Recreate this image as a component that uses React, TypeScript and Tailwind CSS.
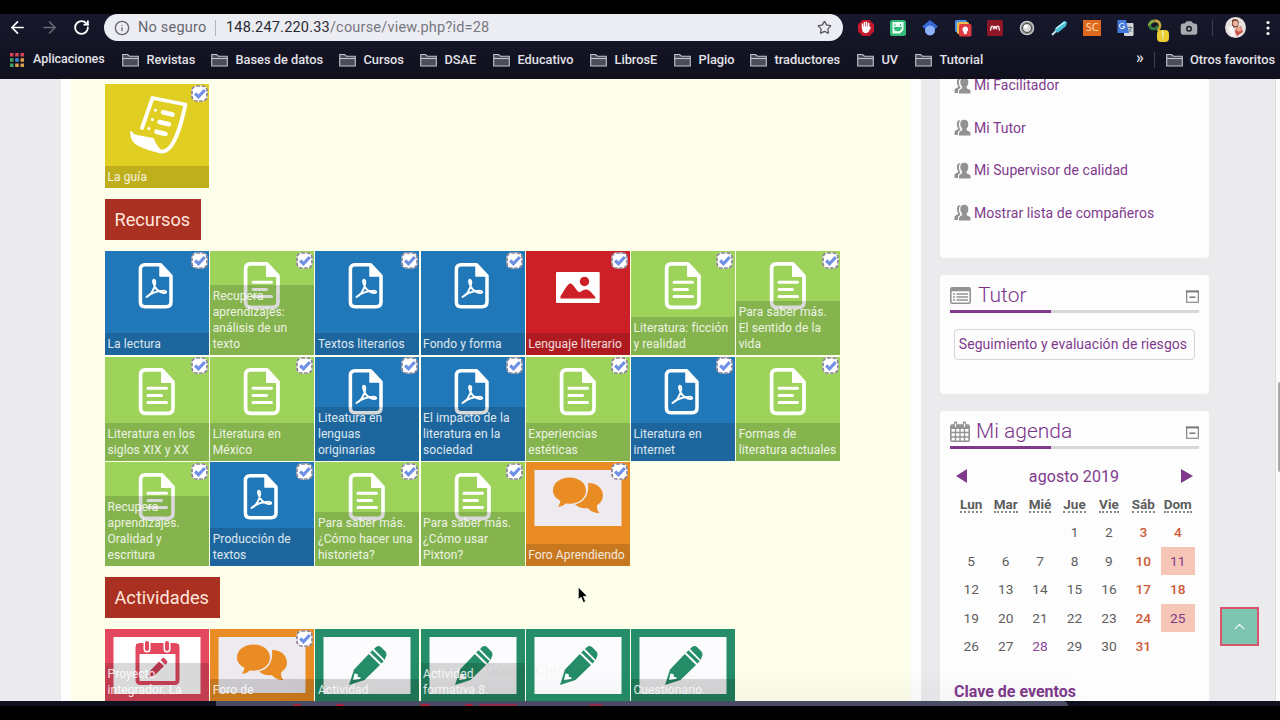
import React from 'react';
import { ArrowLeft, ArrowRight, RotateCw, Info, Star, Camera, ChevronUp } from 'lucide-react';
import clsx from 'clsx';

type Kind = 'guide' | 'pdf' | 'doc' | 'image' | 'forum' | 'calendar' | 'pencil';

interface TileData {
  kind: Kind;
  lines: string[];
  done?: boolean;
}

const tileColors: Record<Kind, string> = {
  guide: 'bg-[#e1ce22]',
  pdf: 'bg-[#2178b9]',
  doc: 'bg-[#9dd35b]',
  image: 'bg-[#cc1f26]',
  forum: 'bg-[#ea8c24]',
  calendar: 'bg-[#e4485f]',
  pencil: 'bg-[#258e68]',
};

const resources: TileData[] = [
  { kind: 'pdf', lines: ['La lectura'], done: true },
  { kind: 'doc', lines: ['Recupera', 'aprendizajes:', 'análisis de un', 'texto'], done: true },
  { kind: 'pdf', lines: ['Textos literarios'], done: true },
  { kind: 'pdf', lines: ['Fondo y forma'], done: true },
  { kind: 'image', lines: ['Lenguaje literario'], done: true },
  { kind: 'doc', lines: ['Literatura: ficción', 'y realidad'], done: true },
  { kind: 'doc', lines: ['Para saber más.', 'El sentido de la', 'vida'], done: true },
  { kind: 'doc', lines: ['Literatura en los', 'siglos XIX y XX'], done: true },
  { kind: 'doc', lines: ['Literatura en', 'México'], done: true },
  { kind: 'pdf', lines: ['Liteatura en', 'lenguas', 'originarias'], done: true },
  { kind: 'pdf', lines: ['El impacto de la', 'literatura en la', 'sociedad'], done: true },
  { kind: 'doc', lines: ['Experiencias', 'estéticas'], done: true },
  { kind: 'pdf', lines: ['Literatura en', 'internet'], done: true },
  { kind: 'doc', lines: ['Formas de', 'literatura actuales'], done: true },
  { kind: 'doc', lines: ['Recupera', 'aprendizajes.', 'Oralidad y', 'escritura'], done: true },
  { kind: 'pdf', lines: ['Producción de', 'textos'], done: true },
  { kind: 'doc', lines: ['Para saber más.', '¿Cómo hacer una', 'historieta?'], done: true },
  { kind: 'doc', lines: ['Para saber más.', '¿Cómo usar', 'Pixton?'], done: true },
  { kind: 'forum', lines: ['Foro Aprendiendo'], done: true },
];

const activities: TileData[] = [
  { kind: 'calendar', lines: ['Proyecto', 'integrador. La', '', ''] },
  { kind: 'forum', lines: ['Foro de', '', ''], done: true },
  { kind: 'pencil', lines: ['Actividad', '', ''] },
  { kind: 'pencil', lines: ['Actividad', 'formativa 8.', '', ''] },
  { kind: 'pencil', lines: [''] },
  { kind: 'pencil', lines: ['Cuestionario.', '', ''] },
];

const bookmarks = [
  { label: 'Revistas', width: 'w-[89px]' },
  { label: 'Bases de datos', width: 'w-[128px]' },
  { label: 'Cursos', width: 'w-[81px]' },
  { label: 'DSAE', width: 'w-[73px]' },
  { label: 'Educativo', width: 'w-[97px]' },
  { label: 'LibrosE', width: 'w-[84px]' },
  { label: 'Plagio', width: 'w-[76px]' },
  { label: 'traductores', width: 'w-[107px]' },
  { label: 'UV', width: 'w-[58px]' },
  { label: 'Tutorial', width: 'w-[221px]' },
];

const weekDays = ['Lun', 'Mar', 'Mié', 'Jue', 'Vie', 'Sáb', 'Dom'];

const TileIcon: React.FC<{ kind: Kind }> = ({ kind }) => (
  <svg viewBox="0 0 104 104" className="block h-[104px] w-[104px]" fill="none">
    {kind === 'guide' && (
      <g stroke="#fff" strokeWidth="3.8" strokeLinejoin="round" strokeLinecap="round">
        <path d="M37 44L47.500 14L80.500 20.500C77 36 74 49 68 59C64 66 59 68.500 54 67.200" />
        <path d="M26 48C27 50 29 51.500 32 52L48 55C50 60 52 64 57 67.500C52 68.500 48 66.500 35 62C28 59 26 54 26 48Z" fill="#fff" strokeWidth="1.800" />
        <path d="M58 28.300L67.500 30.600M54.500 38L64 40.300M51.500 47.700L60.500 50" strokeWidth="4.600" />
        <path d="M50.500 26.200h.1M47.300 35.500h.1M43.800 44.500h.1" strokeWidth="3" />
      </g>
    )}
    {kind === 'pdf' && (
      <g stroke="#fff" strokeLinejoin="round" strokeLinecap="round">
        <path d="M40 13.700H55.500L66 25V51Q66 55.700 61 55.700H40Q35.400 55.700 35.400 51V18.500Q35.400 13.700 40 13.700Z" strokeWidth="3.500" />
        <path d="M55 13.500V25H66Z" fill="#fff" strokeWidth="1.500" />
        <path d="M41.500 46C46 44 49 38 50.200 32.500C50.800 28 47.300 27.500 48.200 31.500C49.500 37 53 41 59 42C62.500 42.300 61.500 39.300 58 39.700C52 40 45.500 42.500 41.500 46Z" strokeWidth="1.900" />
      </g>
    )}
    {kind === 'doc' && (
      <g stroke="#fff" strokeLinejoin="round" strokeLinecap="round">
        <path d="M40.500 12.900H57L68 25V51Q68 56.300 63 56.300H40.500Q35.600 56.300 35.600 51V18Q35.600 12.900 40.500 12.900Z" strokeWidth="3.700" />
        <path d="M57 13V25H68Z" fill="#fff" strokeWidth="2" />
        <path d="M43 31.200H61.500M43 38.400H56.500M43 45.600H61.500" strokeWidth="3" />
      </g>
    )}
    {kind === 'image' && (
      <g>
        <rect x="30" y="21" width="43.700" height="31" rx="1" fill="#fff" />
        <circle cx="58.500" cy="30.500" r="4.700" fill="#cc1f26" />
        <path d="M34.500 47.500V45C38 41 41 32.500 44.500 32.500C48 33 50 40 53 41C55 41.500 57 37.800 60.500 38.500C64 39 66.500 43 69.300 46V47.500Z" fill="#cc1f26" />
      </g>
    )}
    {kind === 'forum' && (
      <g>
        <rect x="8.500" y="8" width="87" height="56" fill="#eeebf0" />
        <path d="M62 21C70 20.500 77 26 77 33.500C77 38 74.500 41 71.300 43C70.500 46 71.500 49 73.500 51C68 51 64.500 49 62 46.200C56 46.800 52 45 49 42.500C58 40.500 63.500 33 62 21Z" fill="#ea8c24" />
        <path d="M43.500 15.500C53 15.500 60 21 60 28.500C60 36 53 41.700 43.500 41.700L39.500 41.400C37.500 43.500 35 44.600 31.500 44.600C33.200 43 34.300 41 34.300 38.700C29.800 36.500 27 33 27 28.500C27 21 34 15.500 43.500 15.500Z" fill="#ea8c24" />
      </g>
    )}
    {kind === 'calendar' && (
      <g>
        <rect x="8.500" y="8" width="87" height="57" fill="#fff" />
        <rect x="32.500" y="16" width="40" height="38" rx="2.500" stroke="#e4485f" strokeWidth="4" />
        <path d="M31 15H74V25H31Z" fill="#e4485f" />
        <path d="M42 14V20M62 14V20" stroke="#fff" strokeWidth="7" strokeLinecap="round" />
        <path d="M42 14V20M62 14V20" stroke="#e4485f" strokeWidth="4" strokeLinecap="round" />
        <path d="M43 48.500L45 42L54 32.500L59 37L49.500 46.500ZM55.500 31L57.500 29.200Q58.500 28.400 59.500 29.200L62 32Q62.800 33 62 34L60.300 35.800Z" fill="#d2405a" />
      </g>
    )}
    {kind === 'pencil' && (
      <g>
        <rect x="8.500" y="8" width="87" height="57" fill="#fcfbfd" />
        <path d="M34 56L39 40.500L53.800 25L65 36L49.500 51Z" fill="#258e68" />
        <path d="M55.200 23.600L57.500 21.300L68.700 32.200L66.400 34.500Z" fill="#258e68" />
        <path d="M59 20L61 18Q63.500 16 66 18L70.500 22.500Q72.500 25.500 70.500 28.500L69.800 31Z" fill="#258e68" />
        <path d="M38 51L39.500 44.500L42.500 45L43 48L46 48.500L45 50Z" fill="#fff" />
      </g>
    )}
  </svg>
);

const Tile: React.FC<TileData> = ({ kind, lines, done }) => (
  <div className={clsx('relative h-[104px] w-[104px]', tileColors[kind])}>
    <TileIcon kind={kind} />
    <div className="absolute inset-x-0 bottom-0 bg-black/15 py-[3px] pl-[2.5px] text-[12px] leading-4 tracking-[0.1px] whitespace-nowrap text-white/85">
      {lines.map((line, i) => (
        <div key={i} className="h-4">{line}</div>
      ))}
    </div>
    {done && (
      <svg viewBox="0 0 17 17" className="absolute top-[0.5px] right-[1.5px] h-[17px] w-[17px]" fill="none">
        <rect x="1.500" y="1.500" width="14" height="14" rx="4" fill="#fff" stroke="#fff" strokeWidth="2" />
        <rect x="1" y="1" width="15" height="15" rx="4.500" stroke="#8b8296" strokeWidth="1.700" strokeDasharray="3.600 1.500" />
        <path d="M4.200 8.500L7.500 11.800L13.800 5" stroke="#6f90e4" strokeWidth="3.200" />
      </svg>
    )}
  </div>
);

const Folder: React.FC = () => (
  <svg viewBox="0 0 17 14" className="h-[14px] w-[17px] shrink-0" fill="#4c4d5b" stroke="#c3c3cb" strokeWidth="1.1">
    <path d="M.7 13V1.500H5.500L7.500 3.200H16.300V13Z" />
    <path d="M.7 5.500H16.300" />
  </svg>
);

const Users: React.FC = () => (
  <svg viewBox="0 0 17 17" className="h-[17px] w-[17px]" fill="#929292">
    <path d="M5.500 1.200C3.800 1.200 2.800 2.800 2.900 5C3 7 3.600 8.500 4.300 9.500C4 11 1 11.200.5 12.800V16H4V13.200C4.500 11.800 6 11.500 6.500 10.500C5.300 9 4.700 6.800 4.900 4.800C5 3.200 5.600 2 6.800 1.400Z" />
    <path d="M10.300.8C7.600.8 6.200 2.500 6.300 5C6.400 7.200 7.200 8.600 8.100 9.600V11C7.600 12.200 5.200 12.300 5 13.800V16.500H16.500V13.800C16 12.200 13.200 12.200 12.600 11V9.600C13.700 8.500 14.300 7 14.300 5C14.300 2.500 13 .8 10.300.8Z" />
  </svg>
);

const AppsIcon: React.FC = () => (
  <svg viewBox="0 0 14 14" className="h-[14px] w-[14px] shrink-0">
    <path d="M0 0h3.500v3.500H0zM5.200 0h3.500v3.500H5.200zM10.500 0h3.500v3.500h-3.500z" fill="#d84455" />
    <path d="M0 5.200h3.500v3.500H0zM0 10.500h3.500v3.500H0z" fill="#3fa565" />
    <path d="M5.200 5.200h3.500v3.500H5.200z" fill="#3f87dc" />
    <path d="M10.500 5.200h3.500v3.500h-3.500zM10.500 10.500h3.500v3.500h-3.500zM5.200 10.500h3.500v3.500H5.200z" fill="#dfa04a" />
  </svg>
);

const Extensions: React.FC = () => (
  <div className="ml-[13.5px] flex items-center gap-[14.4px]">
    <svg viewBox="0 0 18 18" className="h-[18px] w-[18px] shrink-0">
      <path d="M5.500 1H12.500L17 5.500V12.500L12.500 17H5.500L1 12.500V5.500Z" fill="#c3192b" />
      <path d="M5.500 8V5M7.500 8V3.500M9.600 8V3.300M11.700 9V4.500" stroke="#fff" strokeWidth="1.500" strokeLinecap="round" />
      <path d="M4.800 7.500H12.500L14 8.500L11.500 13Q8.500 15.300 6 13Q4.800 11.500 4.800 7.500Z" fill="#fff" />
    </svg>
    <svg viewBox="0 0 18 18" className="h-[18px] w-[18px] shrink-0">
      <rect x="1" y="1" width="16" height="16" rx="2.500" fill="#32bb78" />
      <path d="M3.500 3H14.500V11L11 14.500H3.500Z" fill="#eafff3" />
      <path d="M6 5v2M11.500 5v2M5 8.500H12.500Q12 12 8.700 12Q5.500 12 5 8.500Z" fill="#32bb78" stroke="#32bb78" />
    </svg>
    <svg viewBox="0 0 18 18" className="h-[18px] w-[18px] shrink-0">
      <path d="M9 1L17 7.500L14 10H4L1 7.500Z" fill="#356ad5" />
      <circle cx="9" cy="11.500" r="5" fill="#8db2f7" />
    </svg>
    <svg viewBox="0 0 18 18" className="h-[18px] w-[18px] shrink-0">
      <rect x="1" y="1" width="12" height="12" rx="1.500" fill="#4895e8" />
      <rect x="3" y="3" width="12" height="12" rx="1.500" fill="#e9bd47" />
      <rect x="5" y="5" width="12.500" height="12.500" rx="1.500" fill="#dd3941" />
      <path d="M11.300 7.500a3 3 0 0 1 1.500 5.500v2h-3v-2a3 3 0 0 1 1.500-5.500z" fill="#fff" />
    </svg>
    <svg viewBox="0 0 18 18" className="h-[18px] w-[18px] shrink-0">
      <rect x="1" y="1" width="16" height="16" rx="2" fill="#8f1626" />
      <path d="M4.200 11.500Q5 10.500 5 9Q5 7.300 6.300 7.300Q7.500 7.300 7.600 9V10.500M10.400 10.500V9Q10.500 7.300 11.700 7.300Q13 7.300 13 9Q13 10.500 13.800 11.500" stroke="#f6dfe3" strokeWidth="1.500" fill="none" />
      <circle cx="9" cy="8.200" r="1.500" fill="#f6dfe3" />
    </svg>
    <svg viewBox="0 0 18 18" className="h-[18px] w-[18px] shrink-0">
      <circle cx="9" cy="9" r="6.700" fill="#8d8f91" stroke="#c9c9c9" strokeWidth="1.200" />
      <circle cx="9" cy="9" r="4.500" fill="#d9d9d9" stroke="#444" />
      <circle cx="7.800" cy="7.500" r="2" fill="#fff" />
    </svg>
    <svg viewBox="0 0 18 18" className="h-[18px] w-[18px] shrink-0">
      <path d="M1 16L6 11" stroke="#c5dce8" strokeWidth="2" />
      <path d="M3.500 10L13 2L16 3L15 7L6.500 14Z" fill="#48bfd8" />
      <path d="M5 9.500L14 3" stroke="#c6f1fa" strokeWidth="1.500" />
    </svg>
    <div className="flex h-4 w-[18px] shrink-0 items-center justify-center bg-[#df681f] px-px font-['Open_Sans',sans-serif] text-[11px] text-[#ffe1b8]">SC</div>
    <svg viewBox="0 0 18 18" className="h-[18px] w-[18px] shrink-0">
      <rect x="8" y="4" width="9.500" height="13" rx="1" fill="#d4d6d9" />
      <path d="M1.500 1H10L13 14H1.500Z" fill="#4479dc" />
      <path d="M8.500 5.500A2.700 2.700 0 1 0 8.800 7.700H6.500" stroke="#fff" fill="none" />
      <path d="M11.500 8.500H16M14 7V8.500M15.500 9Q14 12 12.500 13M12.500 10L15.500 13" stroke="#66788a" fill="none" />
    </svg>
    <div className="relative h-[18px] w-[18px] shrink-0">
      <svg viewBox="0 0 18 18" className="h-[18px] w-[18px]" fill="none" strokeWidth="2.800">
        <path d="M1 7Q2 2 6.500 2" stroke="#83ab3f" />
        <path d="M6.500 2Q12 1.500 12 7L10 12" stroke="#c7a93e" />
        <path d="M1.500 6.500Q3 11 8 9.500L9.500 7" stroke="#2f7a3e" />
      </svg>
      <span className="absolute top-[11px] left-[9px] flex h-3 w-3 items-center justify-center rounded-sm bg-[#e8cc32] text-[10px] text-white">!</span>
    </div>
    <Camera size={18} strokeWidth={2} fill="#a9abb0" color="#a9abb0" className="shrink-0 [&>circle]:fill-[#a9abb0] [&>circle]:stroke-[#17192a]" />
  </div>
);

const Collapse: React.FC = () => (
  <svg viewBox="0 0 13 13" className="mt-[2px] ml-auto h-[13px] w-[13px]" fill="none" stroke="#777">
    <path d="M.700 1.500H12.300V12.300H.700Z" strokeWidth="1.100" />
    <path d="M0 1.400H13" strokeWidth="2" />
    <path d="M3.500 7.200H9.500" strokeWidth="1.500" />
  </svg>
);

interface BlockHeaderProps {
  icon: React.ReactNode;
  title: string;
  titleClass: string;
}

const BlockHeader: React.FC<BlockHeaderProps> = ({ icon, title, titleClass }) => (
  <div>
    <div className="flex h-[35px] items-center pt-[5px]">
      {icon}
      <h2 className={clsx('text-[21px] leading-6 font-light text-[#7c3489]', titleClass)}>{title}</h2>
      <Collapse />
    </div>
    <div className="h-[3px] bg-[#d8d8da]">
      <div className="h-full w-[101px] bg-[#803a8c]"></div>
    </div>
  </div>
);

const Calendar: React.FC = () => (
  <div className="mx-1 mt-[19px]">
    <div className="flex h-4 items-center justify-between px-[2px]">
      <svg viewBox="0 0 11 14" className="h-[14px] w-[11px]" fill="#803a8c"><path d="M11 0V14L0 7Z" /></svg>
      <span className="pt-[2px] text-[16px] leading-4 tracking-[0.1px] text-[#803a8c]">agosto 2019</span>
      <svg viewBox="0 0 12 14" className="h-[14px] w-[12px]" fill="#803a8c"><path d="M0 0V14L12 7Z" /></svg>
    </div>
    <div className="mt-[6px] grid grid-cols-7 auto-rows-[28.4px] text-center text-[13.700px] leading-[28px] text-[#5d5d5d]">
      {weekDays.map((day) => (
        <div key={day} className="flex items-center justify-center pt-px">
          <span className="border-b-2 border-dotted border-[#888] text-[13.500px] leading-[14px] font-bold">{day}</span>
        </div>
      ))}
      <div className="col-span-3"></div>
      {Array.from({ length: 31 }, (_, i) => i + 1).map((day) => {
        const weekend = day % 7 === 3 || day % 7 === 4;
        const event = day === 11 || day === 25;
        return (
          <div
            key={day}
            className={clsx(
              weekend && !event && 'font-medium text-[#cf5a35]',
              event && 'bg-[#f5c6b5] text-[#803a8c]',
              day === 28 && 'text-[#8c4399]',
            )}
          >
            {day}
          </div>
        );
      })}
    </div>
  </div>
);

const App: React.FC = () => {
  return (
    <div className="relative flex h-[720px] w-[1280px] flex-col overflow-hidden bg-black font-[Roboto,sans-serif]">
      {/* Browser chrome */}
      <header className="mt-[14px] h-[65px] shrink-0 bg-gradient-to-b from-[#17182c] to-[#10101e]">
        <div className="flex h-[27px] items-center">
          <ArrowLeft size={19} strokeWidth={2.2} className="ml-[8px] shrink-0 text-white" />
          <ArrowRight size={19} strokeWidth={2} className="ml-[13px] shrink-0 text-[#6a6b78]" />
          <RotateCw size={17} strokeWidth={2.600} className="ml-[14px] shrink-0 text-white" />
          <div className="ml-[14px] flex h-[27px] w-[739px] shrink-0 items-center rounded-full bg-[#ececf3] text-[14.500px] text-[#77787e]">
            <Info size={16} className="ml-[10px] text-[#66676d]" />
            <span className="ml-[8px] w-[77px] tracking-[0.2px] whitespace-nowrap text-[#66676d]">No seguro</span>
            <span className="h-4 w-px bg-[#b4b4bb]"></span>
            <span className="ml-[10px] tracking-[0.2px]"><span className="text-[#292a30]">148.247.220.33</span>/course/view.php?id=28</span>
            <Star size={15} className="mr-[11px] ml-auto text-[#54555b]" />
          </div>
          <Extensions />
          <span className="ml-[14px] h-4 w-px bg-[#3e3f50]"></span>
          <svg viewBox="0 0 21 21" className="ml-[11.5px] h-[21px] w-[21px] shrink-0">
            <circle cx="10.500" cy="10.500" r="10.500" fill="#e8dfdf" />
            <path d="M7 3Q12 0 14 5L13 10L7 11Z" fill="#754637" />
            <circle cx="10.500" cy="6.500" r="2.700" fill="#e8b69f" />
            <path d="M3 10L8 9L10 19H6Z" fill="#f9f7fa" />
            <path d="M11 11L16 9L18 15L12 19L10 15Z" fill="#cc5549" />
            <circle cx="14" cy="12" r="2.500" fill="#e8a58c" />
          </svg>
          <svg viewBox="0 0 4 16" className="ml-[20px] h-4 w-1 shrink-0" fill="#fff">
            <circle cx="2" cy="2.500" r="1.600" /><circle cx="2" cy="8" r="1.600" /><circle cx="2" cy="13.500" r="1.600" />
          </svg>
        </div>
        <div className="flex h-[37px] items-center text-[12.800px] font-medium whitespace-nowrap text-[#e2e2e8]">
          <div className="flex w-[122px] shrink-0 items-center gap-[9px] pl-[10px] text-[12.500px]"><AppsIcon />Aplicaciones</div>
          {bookmarks.map((item) => (
            <div key={item.label} className={clsx('flex shrink-0 items-center gap-[7.500px]', item.width)}><Folder />{item.label}</div>
          ))}
          <span className="w-[18px] shrink-0 pb-[3px] text-[16px] leading-4">»</span>
          <span className="h-4 w-px shrink-0 bg-[#3e3f50]"></span>
          <div className="ml-[11px] flex shrink-0 items-center gap-[7px]"><Folder />Otros favoritos</div>
        </div>
      </header>

      {/* Page */}
      <main className="relative flex h-[622px] shrink-0 overflow-hidden bg-[#ebebed]">
        <section className="ml-[61px] h-full w-[860px] shrink-0 bg-[#fefefe] px-[10px]">
          <div className="h-full bg-[#feffea] pt-[5px] pl-[34px]">
            <Tile kind="guide" lines={['La guía']} done />
            <h3 className="mt-[11px] flex h-[41px] w-[96px] items-center bg-[#aa3021] pt-px pl-[9.500px] text-[18.200px] text-[#ffe6dc]">Recursos</h3>
            <div className="mt-[11px] grid grid-cols-[repeat(7,104px)] gap-x-[1.200px] gap-y-[1.500px]">
              {resources.map((tile, i) => <Tile key={i} {...tile} />)}
            </div>
            <h3 className="mt-[11px] flex h-[41px] w-[115px] items-center bg-[#aa3021] pl-[9.500px] text-[18.200px] text-[#ffe6dc]">Actividades</h3>
            <div className="mt-[11px] grid grid-cols-[repeat(7,104px)] gap-[1.200px]">
              {activities.map((tile, i) => <Tile key={i} {...tile} />)}
            </div>
          </div>
        </section>

        <aside className="ml-[19px] flex w-[269px] shrink-0 flex-col gap-[17px]">
          <div className="h-[179px] shrink-0 rounded-b bg-[#fdfdfe] pl-[14px]">
            <ul className="-mt-[15px] text-[14px] leading-3 tracking-[0.05px] text-[#803a8c]">
              {['Mi Facilitador', 'Mi Tutor', 'Mi Supervisor de calidad', 'Mostrar lista de compañeros'].map((name) => (
                <li key={name} className="flex h-[42.500px] items-center gap-[3px]"><Users />{name}</li>
              ))}
            </ul>
          </div>

          <div className="h-[119px] shrink-0 rounded bg-[#fdfdfe] px-[10px]">
            <BlockHeader
              title="Tutor"
              titleClass="ml-[7px]"
              icon={
                <svg viewBox="0 0 21 17" className="h-[17px] w-[21px]" fill="none" stroke="#939393" strokeWidth="1.600">
                  <rect x=".8" y=".8" width="19.400" height="15.400" rx="1.500" />
                  <path d="M1 2.500H20" strokeWidth="3.500" />
                  <path d="M3 7H5M6.500 7H18M3 10H5M6.500 10H18M3 13H5M6.500 13H18" />
                </svg>
              }
            />
            <button className="mt-[16px] ml-1 block h-[31px] w-[241px] rounded border border-[#d5d5d8] pr-[3px] text-center text-[14px] tracking-[0.05px] whitespace-nowrap text-[#803a8c]">
              Seguimiento y evaluación de riesgos
            </button>
          </div>

          <div className="h-[330px] shrink-0 rounded bg-[#fdfdfe] px-[10px]">
            <BlockHeader
              title="Mi agenda"
              titleClass="ml-[6px]"
              icon={
                <svg viewBox="0 0 20 21" className="h-[21px] w-[20px]" fill="none" stroke="#939393" strokeWidth="1.300">
                  <rect x=".8" y="4" width="18.400" height="16.200" rx="1.500" strokeWidth="1.600" />
                  <path d="M1 6H19" strokeWidth="4" />
                  <path d="M1 11.500H19M1 16H19M5.500 8V20M10 8V20M14.500 8V20" />
                  <path d="M5.500 6V2M14.500 6V2" strokeWidth="3.400" strokeLinecap="round" />
                  <path d="M5.500 5.500V2.500M14.500 5.500V2.500" stroke="#fff" strokeWidth="1.200" strokeLinecap="round" />
                </svg>
              }
            />
            <Calendar />
            <h4 className="mt-[22px] ml-1 text-[16px] leading-5 font-bold text-[#803a8c]">Clave de eventos</h4>
          </div>
        </aside>

        {/* Scrollbar */}
        <div className="ml-auto h-full w-[5px] border-l border-[#dcdcdf] bg-[#fafafb] pt-[303px] pl-[2px]">
          <div className="h-[90px] w-[2px] rounded-l bg-[#a8a8aa]"></div>
        </div>

        {/* Back to top */}
        <button className="absolute top-[528px] left-[1220px] flex h-[39px] w-[39px] items-center justify-center border-2 border-[#d8566b] bg-[#7ec5b1]">
          <ChevronUp size={17} strokeWidth={1.800} className="text-white/90" />
        </button>

        {/* Fading dock label */}
        <span className="absolute top-[581px] left-[486px] text-[14.500px] leading-[22px] text-black/5">Google Chrome</span>

        {/* Mouse pointer */}
        <svg viewBox="0 0 12 19" className="absolute top-[507px] left-[577px] h-[18px] w-[12px]">
          <path d="M1 1V14.500L4 11.800L6.300 17.500L8.800 16.400L6.500 11H10.800Z" fill="#000" stroke="#fff" strokeWidth=".8" />
        </svg>
      </main>

      {/* Dock edge */}
      <div className="relative h-[5px] shrink-0 bg-[#10111e] pl-[300px]">
        <div className="flex h-full w-[768px] items-end rounded-tr-[5px] bg-[#4a4c64] shadow-[-84px_0_0_0_#4a4c64,0_-4px_30px_rgba(0,0,0,0.2)]">
          <span className="-ml-[7px] h-[2px] w-[8px] rounded-t bg-[#ad2440]"></span>
          <span className="ml-[35px] h-[2px] w-[8px] rounded-t bg-[#ad2440]"></span>
          <span className="ml-[76px] h-[2px] w-[10px] rounded-t bg-[#ad2440]"></span>
          <span className="ml-[35px] h-[2px] w-[8px] rounded-t bg-[#ad2440]"></span>
          <span className="ml-[6px] h-[2px] w-[38px] bg-[#8b2c4a]"></span>
          <span className="ml-[72px] h-[2px] w-[14px] rounded-t bg-[#8b2c4a]"></span>
        </div>
      </div>
      <div className="relative h-[14px] shrink-0 bg-black"></div>
    </div>
  );
};

export default App;
